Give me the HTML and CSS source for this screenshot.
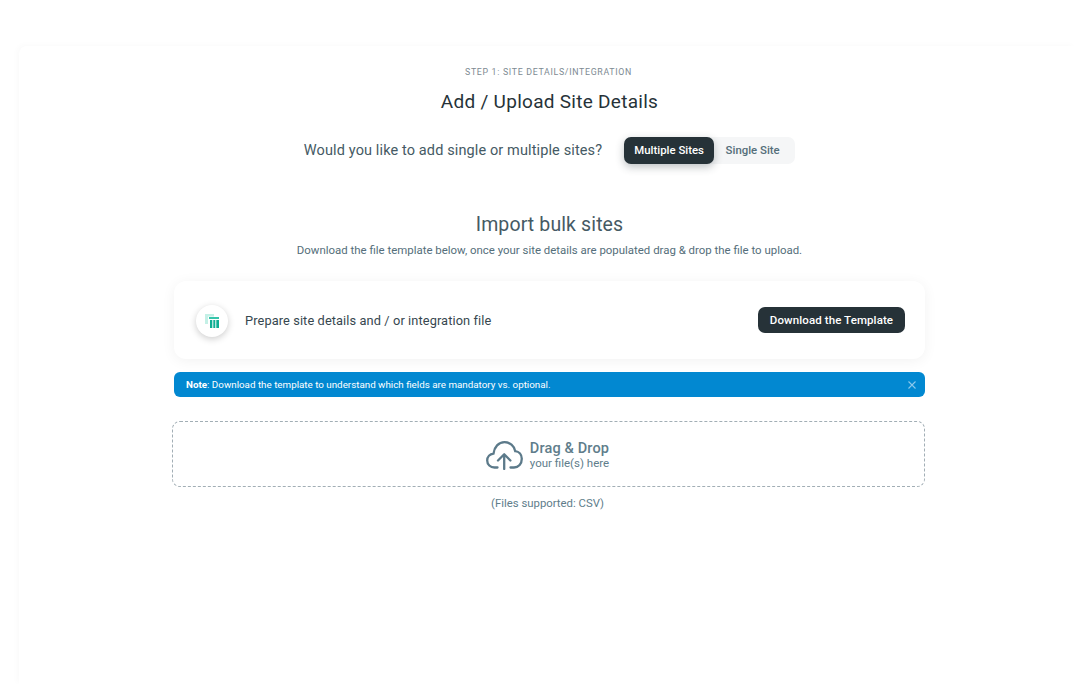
FILE: index.html
```html
<!DOCTYPE html>
<html lang="en">
<head>
<meta charset="utf-8">
<title>Add / Upload Site Details</title>
<link rel="stylesheet" href="styles.css">
</head>
<body>
<main class="panel">
  <p class="step">STEP 1: SITE DETAILS/INTEGRATION</p>
  <h1 class="title">Add / Upload Site Details</h1>
  <div class="question">
    <span class="question-text">Would you like to add single or multiple sites?</span>
    <div class="toggle">
      <span class="toggle-on">Multiple Sites</span>
      <span class="toggle-off">Single Site</span>
    </div>
  </div>
  <h2 class="import-title">Import bulk sites</h2>
  <p class="import-sub">Download the file template below, once your site details are populated drag &amp; drop the file to upload.</p>
  <section class="content">
    <div class="card">
      <div class="card-left">
        <span class="icon-circle">
          <svg class="sheet-icon" width="14" height="14" viewBox="0 0 14 14" aria-hidden="true">
            <path d="M0 0h9v2.500H3V10H0z" fill="#c4f0e6"/>
            <path d="M4 3h10v2H4z" fill="#35c4aa"/>
            <path d="M5 6h2.300v8H5zM8.300 6h2v8h-2zM11.300 6H14v8h-2.700z" fill="#0fae93"/>
          </svg>
        </span>
        <span class="card-text">Prepare site details and / or integration file</span>
      </div>
      <button class="download" type="button">Download the Template</button>
    </div>
    <div class="note">
      <span class="note-text"><b>Note</b>: Download the template to understand which fields are mandatory vs. optional.</span>
      <svg class="note-close" width="8" height="8" viewBox="0 0 8 8" aria-hidden="true"><path d="M.5.5l7 7M7.500.5l-7 7" stroke="#8cc8ec" stroke-width="1.100" fill="none"/></svg>
    </div>
    <div class="drop">
      <svg class="cloud" width="37" height="29" viewBox="0 0 37 29" aria-hidden="true">
        <path d="M11.500 26.500H8.500C4.300 26.500 1.200 23.500 1.200 19.500c0-3.600 2.700-6.500 6.300-7C8.300 6 12.600 1.200 18.500 1.200c5.400 0 9.700 3.800 10.700 8.900 3.900.4 6.600 3.500 6.600 7.700 0 4.900-3.200 8.700-7.800 8.700H24.500" fill="none" stroke="#5c7a8a" stroke-width="2.300" stroke-linecap="round"/>
        <path d="M18.200 28V13.500M12 19.500l6.200-6.200 6.200 6.200" fill="none" stroke="#5c7a8a" stroke-width="2.300" stroke-linecap="round" stroke-linejoin="round"/>
      </svg>
      <div class="drop-text">
        <span class="drop-main">Drag &amp; Drop</span>
        <span class="drop-sub">your file(s) here</span>
      </div>
    </div>
    <p class="supported">(Files supported: CSV)</p>
  </section>
</main>
</body>
</html>
```
FILE: styles.css
```css
* { box-sizing: border-box; }
html, body { height: 100%; }
body {
  margin: 0;
  background: #fff;
  font-family: Roboto, "Liberation Sans", sans-serif;
  overflow: hidden;
}
.panel {
  margin: 46px 0 0 19px;
  height: 638px;
  border-radius: 8px 0 0 0;
  background: #fff;
  box-shadow: -2px -1px 6px rgba(0, 0, 0, .025);
  padding: 20px 0 0 4px;
  display: flex;
  flex-direction: column;
  align-items: center;
}
.step {
  margin: 0;
  font-size: 8.800px;
  line-height: 12px;
  letter-spacing: .68px;
  color: #7d8a92;
}
.title {
  margin: 11px 0 0;
  padding-left: 2px;
  font-size: 19px;
  line-height: 26px;
  font-weight: 400;
  letter-spacing: .28px;
  color: #263238;
}
.question {
  margin-top: 22px;
  padding-left: 2px;
  display: flex;
  align-items: center;
}
.question-text {
  font-size: 14.500px;
  color: #455a64;
  letter-spacing: .12px;
  margin-right: 22px;
}
.toggle {
  display: flex;
  height: 27px;
  width: 171px;
  border-radius: 7px;
  background: #f5f6f7;
}
.toggle-on {
  width: 90px;
  border-radius: 7px;
  background: #263238;
  color: #fff;
  font-size: 11.400px;
  font-weight: 500;
  line-height: 27px;
  text-align: center;
  box-shadow: 0 3px 8px rgba(38, 50, 56, .3);
}
.toggle-off {
  flex: 1;
  text-align: center;
  color: #546e7a;
  font-size: 11.400px;
  font-weight: 500;
  line-height: 26px;
  padding-right: 4px;
}
.import-title {
  margin: 47px 0 0;
  padding-left: 2px;
  font-size: 19.500px;
  line-height: 27px;
  font-weight: 400;
  color: #455a64;
  letter-spacing: .12px;
}
.import-sub {
  margin: 4px 0 0;
  padding-left: 2px;
  font-size: 11.430px;
  line-height: 16px;
  color: #546e7a;
}
.content {
  width: 753px;
  margin-top: 23px;
  display: flex;
  flex-direction: column;
}
.card {
  margin-left: 2px;
  height: 78px;
  padding: 0 20px 0 22px;
  border-radius: 12px;
  background: #fff;
  box-shadow: 0 2px 14px rgba(0, 0, 0, .055);
  display: flex;
  align-items: center;
  justify-content: space-between;
}
.card-left { display: flex; align-items: center; }
.icon-circle {
  width: 32px;
  height: 32px;
  margin-top: 2px;
  border-radius: 50%;
  background: #fff;
  box-shadow: 0 2px 7px rgba(0, 0, 0, .2);
  display: flex;
  align-items: center;
  justify-content: center;
}
.sheet-icon { display: block; }
.card-text {
  margin-left: 17px;
  font-size: 12.800px;
  letter-spacing: .1px;
  color: #37474f;
}
.download {
  width: 147px;
  height: 26px;
  padding: 0;
  border: 0;
  border-radius: 7px;
  background: #263238;
  color: #fff;
  font-family: inherit;
  font-size: 11.500px;
  font-weight: 500;
  letter-spacing: .1px;
}
.note {
  margin: 13px 0 0 2px;
  height: 25px;
  padding: 0 9px 0 12px;
  border-radius: 6px;
  background: #0288d1;
  color: #fff;
  display: flex;
  align-items: center;
  justify-content: space-between;
}
.note-text { font-size: 9.800px; }
.note-text b { font-weight: 700; }
.note-close { display: block; }
.drop {
  margin-top: 24px;
  height: 66px;
  border: 1px dashed #a2aeb5;
  border-radius: 8px;
  display: flex;
  align-items: center;
  justify-content: center;
  padding-right: 2px;
}
.cloud { display: block; margin-right: 7px; margin-top: 3px; }
.drop-text { display: flex; flex-direction: column; margin-top: 4px; }
.drop-main {
  font-size: 14.500px;
  line-height: 15px;
  font-weight: 500;
  letter-spacing: .15px;
  color: #607d8b;
}
.drop-sub {
  font-size: 11.500px;
  line-height: 15px;
  color: #607d8b;
}
.supported {
  margin: 8px 0 0;
  text-align: center;
  padding-right: 2px;
  font-size: 11.350px;
  line-height: 16px;
  color: #607d8b;
}
```
